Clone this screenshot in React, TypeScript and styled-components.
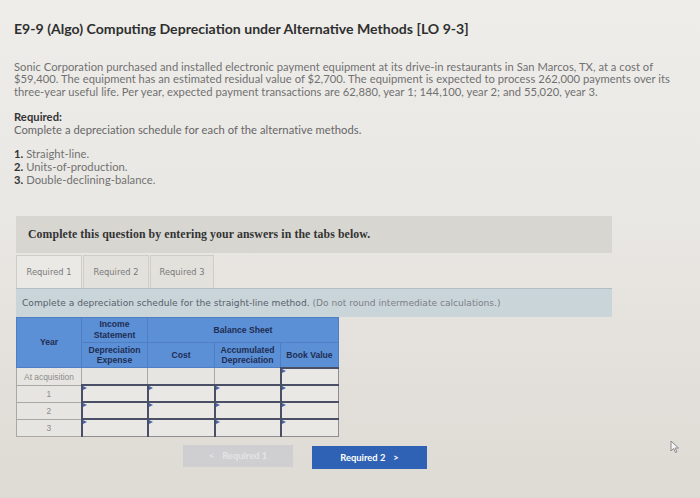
import React from "react";
import styled, { createGlobalStyle } from "styled-components";

const Global = createGlobalStyle`
  html, body { margin: 0; padding: 0; }
  body {
    width: 700px;
    height: 498px;
    overflow: hidden;
    background: linear-gradient(180deg, #eeedea 0%, #e9e7e3 45%, #dedad4 100%);
    font-family: Lato, "Open Sans", sans-serif;
  }
`;

const Page = styled.div`
  position: relative;
  width: 700px;
  height: 498px;
  padding: 20px 0 0 14px;
  box-sizing: border-box;
`;

const Title = styled.h1`
  margin: 0;
  font-family: Lato, sans-serif;
  font-weight: 700;
  font-size: 14.1px;
  line-height: 18px;
  color: #2f2f2f;
`;

const Para = styled.p`
  margin: 23px 0 0 0;
  font-family: Lato, sans-serif;
  font-size: 11.2px;
  line-height: 12.3px;
  letter-spacing: 0.04px;
  color: #717171;
  white-space: nowrap;
`;

const Req = styled.div`
  margin-top: 12px;
  font-size: 11.2px;
  line-height: 13px;
  color: #666;
  letter-spacing: 0.05px;
  b { color: #333; }
`;

const List = styled.div`
  margin-top: 11px;
  font-size: 11.2px;
  line-height: 13.3px;
  color: #717171;
  letter-spacing: 0.05px;
  b { color: #333; }
`;

const Work = styled.div`
  margin: 29px 0 0 2px;
  width: 596px;
`;

const Banner = styled.div`
  height: 37px;
  background: #d7d6d1;
  display: flex;
  align-items: center;
  padding-left: 12px;
  font-family: "Liberation Serif", serif;
  font-weight: 700;
  font-size: 11.8px;
  color: #333;
  letter-spacing: 0.1px;
`;

const Tabs = styled.div`
  display: flex;
  gap: 1px;
  margin-top: 2px;
`;

const Tab = styled.div<{ $active?: boolean; $w: number }>`
  width: ${(p) => p.$w}px;
  height: 33px;
  box-sizing: border-box;
  border: 1px solid #cfcdc8;
  border-bottom: none;
  background: ${(p) => (p.$active ? "#ebe9e5" : "#e3e1dc")};
  display: flex;
  align-items: center;
  justify-content: center;
  font-family: "DejaVu Sans", sans-serif;
  font-size: 8.3px;
  color: #7a7a7a;
`;

const Instr = styled.div`
  height: 28px;
  background: #cad5da;
  border-top: 1px solid #b3bfc6;
  display: flex;
  align-items: center;
  padding-left: 6px;
  font-family: "DejaVu Sans", sans-serif;
  font-size: 9.1px;
  color: #56606a;
  span { color: #7c7f86; }
`;

const Table = styled.table`
  margin-top: 0;
  border-collapse: collapse;
  table-layout: fixed;
  width: 322px;
  font-family: "Liberation Sans", Arial, sans-serif;
`;

const Th = styled.th<{ $h?: number }>`
  background: #5b8fd6;
  border: 1px solid #4f7fc2;
  color: #1f2d52;
  font-weight: 700;
  font-size: 8.6px;
  line-height: 10.5px;
  height: ${(p) => p.$h ?? 24}px;
  padding: 0;
  text-align: center;
`;

const YearCell = styled.td`
  background: #e7e5e1;
  border: 1px solid #a9a8a5;
  color: #8b8b8b;
  font-size: 8.4px;
  height: 16px;
  padding: 0;
  text-align: center;
`;

const Plain = styled.td`
  background: #e7e5e1;
  border: 1px solid #a9a8a5;
  height: 16px;
  padding: 0;
`;

const InputCell = styled.td`
  position: relative;
  background: #eae8e4;
  border: 1px solid #8e8e92;
  border-top: 2px solid #4a4f66;
  border-left: 2px solid #4a4f66;
  height: 15px;
  padding: 0;
  &::before {
    content: "";
    position: absolute;
    left: 0;
    top: 0;
    border-left: 4px solid #4b64a8;
    border-top: 2px solid transparent;
    border-bottom: 2px solid transparent;
  }
`;

const Buttons = styled.div`
  display: flex;
  align-items: flex-start;
  gap: 19px;
  margin-top: 8px;
  padding-left: 167px;
`;

const NavBtn = styled.div<{ $primary?: boolean }>`
  width: ${(p) => (p.$primary ? 115 : 110)}px;
  height: ${(p) => (p.$primary ? 23 : 22)}px;
  display: flex;
  align-items: center;
  justify-content: center;
  gap: 8px;
  background: ${(p) => (p.$primary ? "#2f62b4" : "#cfcfd1")};
  color: ${(p) => (p.$primary ? "#ffffff" : "#e4e4e6")};
  font-family: Lato, sans-serif;
  font-weight: 700;
  font-size: 9.4px;
  margin-top: ${(p) => (p.$primary ? 1 : 0)}px;
`;

const Cursor = styled.svg`
  position: absolute;
  left: 670px;
  top: 440px;
`;

const rows = ["1", "2", "3"];

export default function App() {
  return (
    <>
      <Global />
      <Page>
        <Title>E9-9 (Algo) Computing Depreciation under Alternative Methods [LO 9-3]</Title>
        <Para>
          Sonic Corporation purchased and installed electronic payment equipment at its drive-in restaurants in San Marcos, TX, at a cost of
          <br />
          $59,400. The equipment has an estimated residual value of $2,700. The equipment is expected to process 262,000 payments over its
          <br />
          three-year useful life. Per year, expected payment transactions are 62,880, year 1; 144,100, year 2; and 55,020, year 3.
        </Para>
        <Req>
          <b>Required:</b>
          <br />
          Complete a depreciation schedule for each of the alternative methods.
        </Req>
        <List>
          <div><b>1.</b> Straight-line.</div>
          <div><b>2.</b> Units-of-production.</div>
          <div><b>3.</b> Double-declining-balance.</div>
        </List>
        <Work>
          <Banner>Complete this question by entering your answers in the tabs below.</Banner>
          <Tabs>
            <Tab $active $w={66}>Required 1</Tab>
            <Tab $w={66}>Required 2</Tab>
            <Tab $w={64}>Required 3</Tab>
          </Tabs>
          <Instr>
            Complete a depreciation schedule for the straight-line method.&nbsp;<span>(Do not round intermediate calculations.)</span>
          </Instr>
          <Table>
            <colgroup>
              <col style={{ width: 65 }} />
              <col style={{ width: 66 }} />
              <col style={{ width: 67 }} />
              <col style={{ width: 66 }} />
              <col style={{ width: 58 }} />
            </colgroup>
            <thead>
              <tr>
                <Th rowSpan={2}>Year</Th>
                <Th $h={24}>Income<br />Statement</Th>
                <Th colSpan={3}>Balance Sheet</Th>
              </tr>
              <tr>
                <Th $h={24}>Depreciation<br />Expense</Th>
                <Th>Cost</Th>
                <Th>Accumulated<br />Depreciation</Th>
                <Th>Book Value</Th>
              </tr>
            </thead>
            <tbody>
              <tr>
                <YearCell>At acquisition</YearCell>
                <Plain />
                <Plain />
                <Plain />
                <InputCell />
              </tr>
              {rows.map((r) => (
                <tr key={r}>
                  <YearCell>{r}</YearCell>
                  <InputCell />
                  <InputCell />
                  <InputCell />
                  <InputCell />
                </tr>
              ))}
            </tbody>
          </Table>
          <Buttons>
            <NavBtn>
              <span>&lt;</span>
              <span>Required 1</span>
            </NavBtn>
            <NavBtn $primary>
              <span>Required 2</span>
              <span>&gt;</span>
            </NavBtn>
          </Buttons>
        </Work>
        <Cursor width="12" height="14" viewBox="0 0 12 14">
          <path d="M1 1 L1 11 L3.5 8.5 L5.5 12.5 L7 11.8 L5 8 L8.5 8 Z" fill="#f4f4f4" stroke="#8a8a8a" strokeWidth="1" />
        </Cursor>
      </Page>
    </>
  );
}
